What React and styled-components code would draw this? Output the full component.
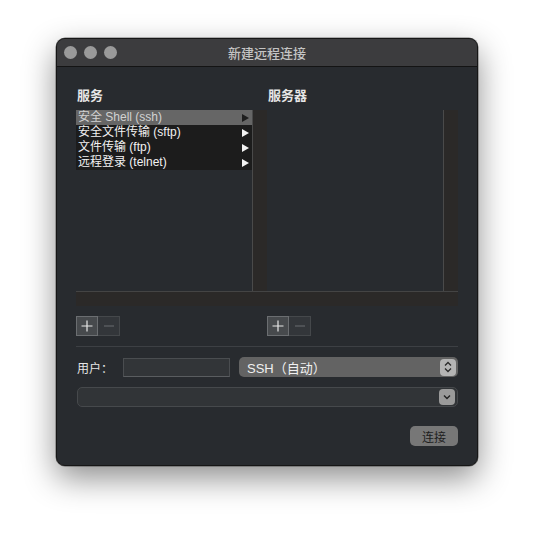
import React from "react";
import styled, { createGlobalStyle } from "styled-components";

const Global = createGlobalStyle`
  html, body { margin: 0; padding: 0; background: #ffffff; }
  body { font-family: "Liberation Sans", "Noto Sans CJK SC", sans-serif; }
`;

const Page = styled.div`
  width: 534px;
  height: 540px;
  padding: 38px 0 0 56px;
  box-sizing: border-box;
`;

const Window = styled.div`
  width: 422px;
  height: 428px;
  box-sizing: border-box;
  border: 1px solid #161616;
  border-radius: 9px;
  background: #282b2f;
  overflow: hidden;
  display: flex;
  flex-direction: column;
  box-shadow: 0 12px 32px rgba(0, 0, 0, 0.45), 0 0 0 0.5px rgba(0,0,0,0.5);
`;

const TitleBar = styled.div`
  height: 28px;
  box-sizing: border-box;
  flex: none;
  background: #3c3c3e;
  border-bottom: 1px solid #141414;
  display: flex;
  align-items: center;
  position: relative;
  padding-left: 7px;
  gap: 7px;
`;

const Light = styled.span`
  width: 13px;
  height: 13px;
  border-radius: 50%;
  background: #9a9a9a;
`;

const Title = styled.div`
  position: absolute;
  left: 0;
  right: 0;
  top: 0;
  bottom: 0;
  display: flex;
  align-items: center;
  justify-content: center;
  font-size: 13px;
  font-weight: 500;
  color: #c4c4c4;
  font-family: "Noto Sans CJK SC", sans-serif;
  pointer-events: none;
`;

const Body = styled.div`
  flex: 1;
  padding: 15px 19px 0 19px;
  display: flex;
  flex-direction: column;
`;

const TwoCols = styled.div`
  display: grid;
  grid-template-columns: 191px 191px;
`;

const Header = styled.div`
  height: 28px;
  box-sizing: border-box;
  padding: 0 0 4px 1px;
  font-size: 13px;
  font-weight: bold;
  color: #e6e6e6;
  display: flex;
  align-items: center;
  font-family: "Noto Sans CJK SC", sans-serif;
`;

const Column = styled.div`
  display: flex;
  height: 181px;
`;

const ListArea = styled.div`
  width: 176px;
  display: flex;
  flex-direction: column;
`;

const Scroller = styled.div`
  width: 14px;
  border-left: 1px solid #4a4a4a;
  background: #2b2928;
`;

const Row = styled.div`
  height: 15px;
  display: flex;
  align-items: center;
  justify-content: space-between;
  padding: 0 3px 0 2px;
  font-size: 12px;
  line-height: 15px;
  background: ${(p) => (p.selected ? "#666666" : "#1c1c1c")};
  color: ${(p) => (p.selected ? "#d2d2d2" : "#f2f2f2")};
  white-space: nowrap;
`;

const Arrow = styled.span`
  width: 0;
  height: 0;
  border-top: 4px solid transparent;
  border-bottom: 4px solid transparent;
  border-left: 7px solid ${(p) => (p.selected ? "#1e1e1e" : "#f2f2f2")};
`;

const HScroller = styled.div`
  height: 14px;
  border-top: 1px solid #444444;
  background: #2b2928;
`;

const BtnGroup = styled.div`
  display: flex;
  margin-top: 10px;
`;

const SegBtn = styled.div`
  width: 22px;
  height: 20px;
  box-sizing: border-box;
  display: flex;
  align-items: center;
  justify-content: center;
  background: ${(p) => (p.active ? "#474a4d" : "#33363a")};
  border: 1px solid ${(p) => (p.active ? "#6b6e71" : "#45484b")};
  border-left-width: ${(p) => (p.active ? "1px" : "0")};
`;

const Separator = styled.div`
  height: 1px;
  background: #3d4044;
  margin-top: 10px;
`;

const UserRow = styled.div`
  display: flex;
  align-items: center;
  margin-top: 10px;
  height: 20px;
`;

const Label = styled.span`
  font-size: 12px;
  color: #e6e6e6;
  width: 46px;
  padding-left: 1px;
  font-family: "Noto Sans CJK SC", sans-serif;
`;

const TextField = styled.div`
  width: 107px;
  height: 19px;
  box-sizing: border-box;
  background: #323538;
  border: 1px solid #4a4d50;
  border-bottom-color: #5a5d60;
`;

const Popup = styled.div`
  margin-left: 9px;
  flex: 1;
  height: 20px;
  border-radius: 5px;
  background: #636363;
  display: flex;
  align-items: center;
  justify-content: space-between;
  padding: 0 2px 0 8px;
  box-sizing: border-box;
  font-size: 13px;
  color: #f0f0f0;
`;

const Combo = styled.div`
  margin-top: 10px;
  margin-left: 1px;
  height: 20px;
  box-sizing: border-box;
  border: 1px solid #46494c;
  border-radius: 5px;
  background: #313437;
  display: flex;
  align-items: center;
  justify-content: flex-end;
  padding-right: 2px;
`;

const KnobBox = styled.span`
  width: 16px;
  height: ${(p) => p.h}px;
  border-radius: 4px;
  background: ${(p) => p.bg};
  display: flex;
  align-items: center;
  justify-content: center;
`;

const Footer = styled.div`
  display: flex;
  justify-content: flex-end;
  margin-top: 19px;
`;

const PushButton = styled.div`
  width: 48px;
  height: 20px;
  border-radius: 5px;
  background: #777777;
  color: #1e1e1e;
  font-size: 12px;
  display: flex;
  align-items: center;
  justify-content: center;
  font-family: "Noto Sans CJK SC", sans-serif;
`;

const services = [
  "安全 Shell (ssh)",
  "安全文件传输 (sftp)",
  "文件传输 (ftp)",
  "远程登录 (telnet)",
];

const PlusMinus = () => (
  <BtnGroup>
    <SegBtn active>
      <svg width="12" height="12" viewBox="0 0 12 12">
        <path d="M6 0.5V11.5M0.5 6H11.5" stroke="#e8e8e8" strokeWidth="1.2" />
      </svg>
    </SegBtn>
    <SegBtn>
      <svg width="10" height="2" viewBox="0 0 10 2">
        <path d="M0 1H10" stroke="#6a6d70" strokeWidth="1.2" />
      </svg>
    </SegBtn>
  </BtnGroup>
);

export default function App() {
  return (
    <Page>
      <Global />
      <Window>
        <TitleBar>
          <Light />
          <Light />
          <Light />
          <Title>新建远程连接</Title>
        </TitleBar>
        <Body>
          <TwoCols>
            <Header>服务</Header>
            <Header>服务器</Header>
            <Column>
              <ListArea>
                {services.map((s, i) => (
                  <Row key={s} selected={i === 0}>
                    <span>{s}</span>
                    <Arrow selected={i === 0} />
                  </Row>
                ))}
              </ListArea>
              <Scroller />
            </Column>
            <Column>
              <ListArea />
              <Scroller />
            </Column>
          </TwoCols>
          <HScroller />
          <TwoCols>
            <PlusMinus />
            <PlusMinus />
          </TwoCols>
          <Separator />
          <UserRow>
            <Label>用户：</Label>
            <TextField />
            <Popup>
              <span>SSH（自动）</span>
              <KnobBox h={17} bg="#b4b4b4">
                <svg width="8" height="12" viewBox="0 0 8 12">
                  <path d="M1 4.5L4 1.5L7 4.5M1 7.5L4 10.5L7 7.5" stroke="#2a2a2a" strokeWidth="1.3" fill="none" />
                </svg>
              </KnobBox>
            </Popup>
          </UserRow>
          <Combo>
            <KnobBox h={16} bg="#9a9a9a">
              <svg width="8" height="6" viewBox="0 0 8 6">
                <path d="M1 1.5L4 4.5L7 1.5" stroke="#222" strokeWidth="1.4" fill="none" />
              </svg>
            </KnobBox>
          </Combo>
          <Footer>
            <PushButton>连接</PushButton>
          </Footer>
        </Body>
      </Window>
    </Page>
  );
}
